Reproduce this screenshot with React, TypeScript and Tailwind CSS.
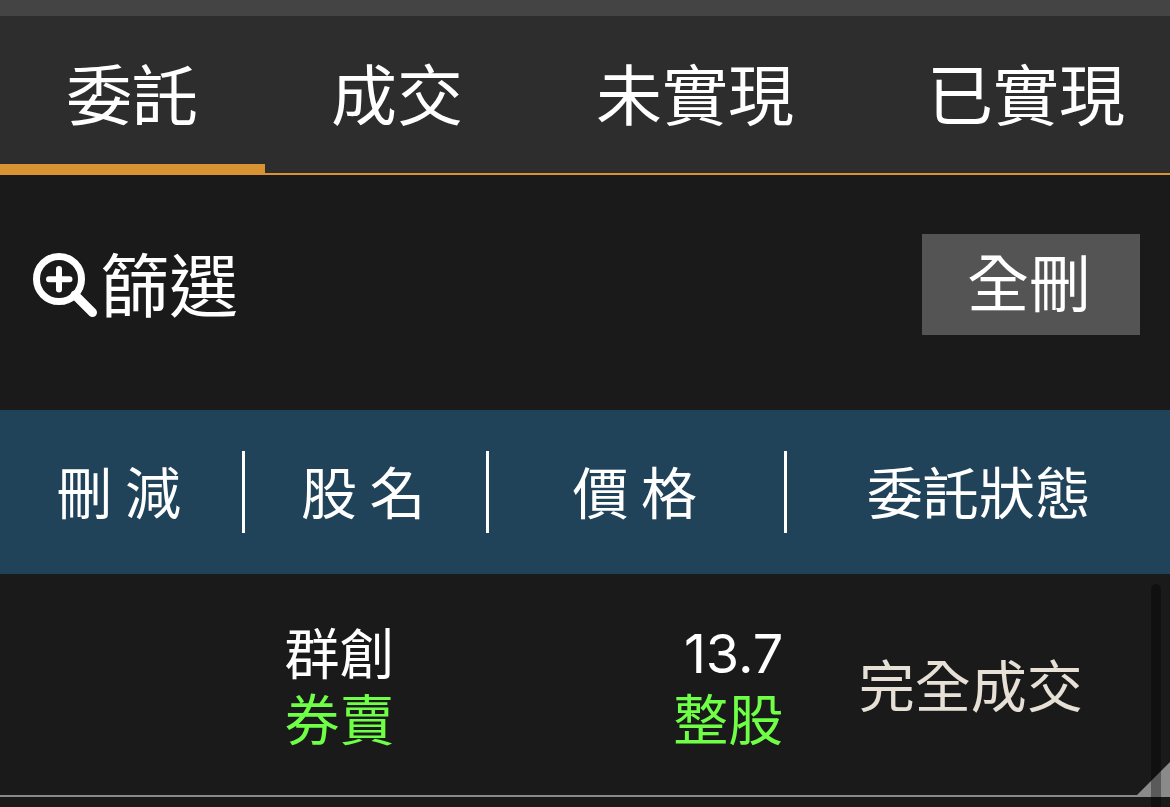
import { useState } from 'react'
import clsx from 'clsx'

const TABS = ['委託', '成交', '未實現', '已實現']

const COLUMNS = [
  { label: '刪 減', width: 'w-[20.9%]' },
  { label: '股 名', width: 'w-[20.9%]' },
  { label: '價 格', width: 'w-[25.5%]' },
  { label: '委託狀態', width: 'w-[32.7%]' },
]

const ORDERS = [{ id: 1, name: '群創', side: '券賣', price: '13.7', lot: '整股', status: '完全成交' }]

function ZoomIcon() {
  return (
    <svg viewBox="0 0 66 66" className="size-[66px] shrink-0" fill="none" stroke="currentColor" aria-hidden="true">
      <circle cx="27" cy="27" r="22.5" strokeWidth="7" />
      <path d="M27 17v20.5M17 27.2h20.5" strokeWidth="6" strokeLinecap="round" />
      <path d="M43 43L60.5 60.5" strokeWidth="9" strokeLinecap="round" />
    </svg>
  )
}

export default function App() {
  const [active, setActive] = useState(TABS[0])

  return (
    <div className="flex min-h-screen flex-col overflow-hidden bg-[#1a1a1a] font-['Inter','Noto_Sans_CJK_TC',sans-serif] text-white">
      <div className="h-4 bg-[#444444]" />

      {/* Tabs */}
      <nav className="flex h-[159px] overflow-hidden border-b-2 border-[#d99332] bg-[#2d2d2d]">
        {TABS.map((tab) => (
          <button
            key={tab}
            type="button"
            onClick={() => setActive(tab)}
            className={clsx(
              'shrink-0 border-b-[9px] pt-3 pr-[67px] pl-[66px] text-[66px] leading-[66px]',
              tab === active ? 'border-[#d99332]' : 'border-transparent'
            )}
          >
            {tab}
          </button>
        ))}
      </nav>

      {/* Filter bar */}
      <div className="flex items-center justify-between pt-[59px] pr-[30px] pb-[75px] pl-8">
        <button type="button" className="flex items-center gap-0.5 text-[69px] leading-[66px]">
          <ZoomIcon />
          <span className="pt-1">篩選</span>
        </button>
        <button type="button" className="h-[101px] w-[218px] bg-[#545454] pr-1 text-[62px] leading-[66px]">
          全刪
        </button>
      </div>

      {/* Orders */}
      <div className="relative flex-1">
        <table className="w-full table-fixed border-collapse text-[55px] leading-[66px]">
          <thead className="bg-[#20435a] font-['Noto_Sans_CJK_TC',sans-serif] text-[56px]">
            <tr>
              {COLUMNS.map((col, i) => (
                <th key={col.label} scope="col" className={clsx('px-0 py-[41px] font-normal', col.width)}>
                  <div
                    className={clsx(
                      'flex h-[82px] items-center justify-center pb-1',
                      i < COLUMNS.length - 1 && 'border-r-[3px] border-white pr-1'
                    )}
                  >
                    {col.label}
                  </div>
                </th>
              ))}
            </tr>
          </thead>
          <tbody>
            {ORDERS.map((order) => (
              <tr key={order.id} className="h-[222px] border-b-2 border-[#8a8a8a]">
                <td />
                <td className="pt-1 pl-10">
                  <div>{order.name}</div>
                  <div className="text-[#6eff46]">{order.side}</div>
                </td>
                <td className="pt-1 pr-1 text-right">
                  <div className="text-[54px]">{order.price}</div>
                  <div className="text-[#6eff46]">{order.lot}</div>
                </td>
                <td className="relative pt-1 pr-4 text-center text-[56px] text-[#e6e0d6]">
                  {order.status}
                  <svg viewBox="0 0 33 33" className="absolute right-0 bottom-0 size-[33px]" aria-hidden="true">
                    <path d="M33 0V33H0z" fill="#8a8a8a" />
                  </svg>
                </td>
              </tr>
            ))}
          </tbody>
        </table>
        <div className="absolute top-[174px] right-[9px] bottom-0 w-[10px] rounded-t-full bg-black/35" />
      </div>
    </div>
  )
}
